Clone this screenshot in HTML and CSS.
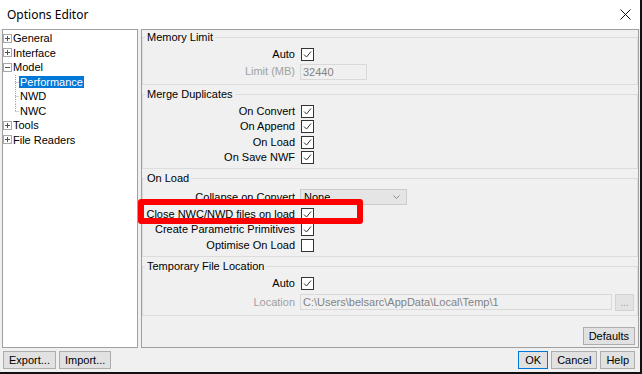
FILE: index.html
```html
<!DOCTYPE html>
<html>
<head>
<meta charset="utf-8">
<title>Options Editor</title>
<link rel="stylesheet" href="styles.css">
</head>
<body>
<div class="window">
  <div class="titlebar">
    <span class="title">Options Editor</span>
    <svg class="close" width="11" height="11" viewBox="0 0 11 11"><path d="M0.5 0.5L10.5 10.5M10.5 0.5L0.5 10.5" stroke="#111" stroke-width="1"/></svg>
  </div>
  <div class="client">
    <div class="main">
      <div class="tree">
        <div class="node"><svg class="exp" viewBox="0 0 9 9"><rect x="0.5" y="0.5" width="8" height="8" fill="#fff" stroke="#a8a8a8"/><path d="M2 4.5H7M4.5 2V7" stroke="#505050"/></svg><span>General</span></div>
        <div class="node"><svg class="exp" viewBox="0 0 9 9"><rect x="0.5" y="0.5" width="8" height="8" fill="#fff" stroke="#a8a8a8"/><path d="M2 4.5H7M4.5 2V7" stroke="#505050"/></svg><span>Interface</span></div>
        <div class="node"><svg class="exp" viewBox="0 0 9 9"><rect x="0.5" y="0.5" width="8" height="8" fill="#fff" stroke="#a8a8a8"/><path d="M2 4.5H7" stroke="#505050"/></svg><span>Model</span></div>
        <div class="node child"><svg class="conn" viewBox="0 0 4 14.5" preserveAspectRatio="none"><path d="M0.5 0V14.5M0.5 7.5H4" stroke="#a0a0a0" stroke-dasharray="1 1"/></svg><span class="tl sel">Performance</span></div>
        <div class="node child"><svg class="conn" viewBox="0 0 4 14.5" preserveAspectRatio="none"><path d="M0.5 0V14.5M0.5 7.5H4" stroke="#a0a0a0" stroke-dasharray="1 1"/></svg><span class="tl">NWD</span></div>
        <div class="node child"><svg class="conn" viewBox="0 0 4 14.5" preserveAspectRatio="none"><path d="M0.5 0V7.5M0.5 7.5H4" stroke="#a0a0a0" stroke-dasharray="1 1"/></svg><span class="tl">NWC</span></div>
        <div class="node"><svg class="exp" viewBox="0 0 9 9"><rect x="0.5" y="0.5" width="8" height="8" fill="#fff" stroke="#a8a8a8"/><path d="M2 4.5H7M4.5 2V7" stroke="#505050"/></svg><span>Tools</span></div>
        <div class="node"><svg class="exp" viewBox="0 0 9 9"><rect x="0.5" y="0.5" width="8" height="8" fill="#fff" stroke="#a8a8a8"/><path d="M2 4.5H7M4.5 2V7" stroke="#505050"/></svg><span>File Readers</span></div>
      </div>
      <div class="panel">
        <div class="groups">
          <fieldset class="group">
            <legend>Memory Limit</legend>
            <div class="form">
              <span class="lbl">Auto</span>
              <span class="cb"><svg viewBox="0 0 11 11"><path d="M2 5.5L4.5 8L9 2.5" fill="none" stroke="#333"/></svg></span>
              <span class="lbl dis">Limit (MB)</span>
              <span class="inp limit">32440</span>
            </div>
          </fieldset>
          <fieldset class="group">
            <legend>Merge Duplicates</legend>
            <div class="form">
              <span class="lbl">On Convert</span>
              <span class="cb"><svg viewBox="0 0 11 11"><path d="M2 5.5L4.5 8L9 2.5" fill="none" stroke="#333"/></svg></span>
              <span class="lbl">On Append</span>
              <span class="cb"><svg viewBox="0 0 11 11"><path d="M2 5.5L4.5 8L9 2.5" fill="none" stroke="#333"/></svg></span>
              <span class="lbl">On Load</span>
              <span class="cb"><svg viewBox="0 0 11 11"><path d="M2 5.5L4.5 8L9 2.5" fill="none" stroke="#333"/></svg></span>
              <span class="lbl">On Save NWF</span>
              <span class="cb"><svg viewBox="0 0 11 11"><path d="M2 5.5L4.5 8L9 2.5" fill="none" stroke="#333"/></svg></span>
            </div>
          </fieldset>
          <fieldset class="group">
            <legend>On Load</legend>
            <div class="form">
              <span class="lbl">Collapse on Convert</span>
              <span class="combo"><span>None</span><svg width="7" height="4" viewBox="0 0 7 4"><path d="M0.5 0.5L3.5 3.5L6.5 0.5" fill="none" stroke="#8a8a8a"/></svg></span>
              <span class="lbl">Close NWC/NWD files on load</span>
              <span class="cb"><svg viewBox="0 0 11 11"><path d="M2 5.5L4.5 8L9 2.5" fill="none" stroke="#333"/></svg></span>
              <span class="lbl">Create Parametric Primitives</span>
              <span class="cb"><svg viewBox="0 0 11 11"><path d="M2 5.5L4.5 8L9 2.5" fill="none" stroke="#333"/></svg></span>
              <span class="lbl">Optimise On Load</span>
              <span class="cb"></span>
            </div>
          </fieldset>
          <fieldset class="group">
            <legend>Temporary File Location</legend>
            <div class="form loose">
              <span class="lbl">Auto</span>
              <span class="cb"><svg viewBox="0 0 11 11"><path d="M2 5.5L4.5 8L9 2.5" fill="none" stroke="#333"/></svg></span>
              <span class="lbl dis">Location</span>
              <span class="locrow"><span class="inp loc">C:\Users\belsarc\AppData\Local\Temp\1</span><span class="dots">...</span></span>
            </div>
          </fieldset>
        </div>
        <div class="panel-foot"><button class="btn">Defaults</button></div>
      </div>
    </div>
    <div class="bottombar">
      <div class="btns"><button class="btn">Export...</button><button class="btn">Import...</button></div>
      <div class="btns"><button class="btn default">OK</button><button class="btn">Cancel</button><button class="btn">Help</button></div>
    </div>
  </div>
  <div class="highlight"></div>
</div>
</body>
</html>
```

FILE: styles.css
```css
* { box-sizing: border-box; }
html, body { margin: 0; padding: 0; }
body {
  width: 642px;
  height: 374px;
  overflow: hidden;
  font-family: "Liberation Sans", Arial, sans-serif;
  font-size: 11px;
  color: #000;
  background: #fff;
}
.window {
  position: relative;
  width: 642px;
  height: 374px;
  border-right: 2px solid #111;
  border-bottom: 2px solid #111;
  display: flex;
  flex-direction: column;
  background: #f0f0f0;
}
.titlebar {
  height: 29px;
  flex: none;
  background: #fff;
  display: flex;
  align-items: center;
  justify-content: space-between;
  padding: 0 9px 0 7px;
}
.title {
  font-family: "Noto Sans", "Open Sans", sans-serif;
  font-size: 12px;
}
.close { display: block; }
.client {
  flex: 1;
  display: flex;
  flex-direction: column;
  padding: 0 1px 0 2px;
}
.main {
  height: 319px;
  flex: none;
  display: flex;
  gap: 3px;
}
.tree {
  width: 136px;
  flex: none;
  background: #fff;
  border: 1px solid #a0a0a0;
  padding-top: 1px;
}
.node {
  height: 14.5px;
  display: flex;
  align-items: center;
  white-space: nowrap;
}
.exp {
  width: 9px;
  height: 9px;
  flex: none;
  margin-right: 1px;
}
.child { padding-left: 12px; }
.conn {
  width: 4px;
  height: 14.5px;
  flex: none;
}
.tl {
  padding: 0 1px;
  line-height: 12px;
}
.sel {
  background: #0078d7;
  color: #fff;
}
.panel {
  flex: 1;
  border: 1px solid #a0a0a0;
  display: flex;
  flex-direction: column;
  padding: 1px 0 2px 0;
}
.groups {
  display: flex;
  flex-direction: column;
}
.group {
  margin: 0 0 3px 0;
  border: 1px solid #dcdcdc;
  padding: 4px 3px 4px 2px;
  min-width: 0;
}
.group legend {
  padding: 0 2px;
  margin: 0;
  line-height: 13px;
  font-size: 11px;
}
.form {
  display: grid;
  grid-template-columns: 150px 1fr;
  column-gap: 5px;
  row-gap: 2.5px;
  align-items: center;
}
.form.loose { row-gap: 4px; }
.lbl {
  text-align: right;
  line-height: 13px;
  white-space: nowrap;
}
.lbl.dis { color: #a0a0a0; }
.cb {
  width: 13px;
  height: 13px;
  margin-left: 1px;
  border: 1px solid #333;
  background: #fff;
  display: block;
}
.cb svg {
  display: block;
  width: 11px;
  height: 11px;
}
.inp {
  display: block;
  height: 16px;
  border: 1px solid #d9d9d9;
  background: #f0f0f0;
  color: #838383;
  padding: 0 2px;
  line-height: 14px;
  white-space: nowrap;
  overflow: hidden;
}
.inp.limit { width: 67px; }
.combo {
  width: 107px;
  height: 16px;
  border: 1px solid #cccccc;
  background: #e5e5e5;
  display: flex;
  align-items: center;
  justify-content: space-between;
  padding: 0 6px 0 3px;
  line-height: 14px;
}
.locrow {
  display: flex;
  align-items: center;
  gap: 3px;
}
.inp.loc { flex: 1; height: 16px; }
.dots {
  width: 19px;
  height: 17px;
  flex: none;
  background: #e3e3e3;
  border: 1px solid #d3d3d3;
  color: #a0a0a0;
  text-align: center;
  line-height: 15px;
  font-size: 10px;
}
.panel-foot {
  margin-top: auto;
  display: flex;
  justify-content: flex-end;
  padding-right: 3px;
}
.btn {
  font-family: "Liberation Sans", Arial, sans-serif;
  font-size: 11px;
  color: #000;
  height: 18px;
  padding: 0 5px;
  margin: 0;
  background: #e1e1e1;
  border: 1px solid #adadad;
  border-radius: 0;
  line-height: 16px;
}
.btn.default { border-color: #0078d7; padding: 0 6px; }
.bottombar {
  flex: 1;
  display: flex;
  align-items: center;
  justify-content: space-between;
  padding: 0 4px 0 1px;
}
.btns {
  display: flex;
  gap: 3px;
}
.highlight {
  position: absolute;
  left: 138px;
  top: 199px;
  width: 225px;
  height: 25px;
  border: 6px solid #ff0000;
  border-radius: 3px;
}
```
